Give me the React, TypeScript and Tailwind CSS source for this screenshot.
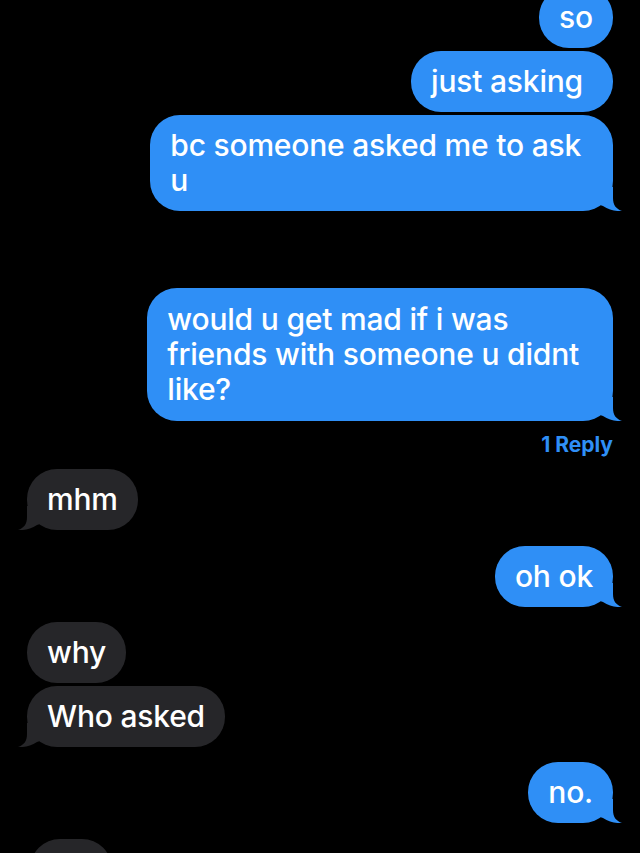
import React from 'react';

type Msg = { text: React.ReactNode; me: boolean; tail?: boolean; mt: string; pad?: string };

const messages: Msg[] = [
  { text: 'so', me: true, mt: '-mt-[13px]' },
  { text: 'just asking', me: true, mt: 'mt-[3px]', pad: 'pr-[30px]' },
  { text: <>bc someone asked me to ask<br />u</>, me: true, tail: true, mt: 'mt-[3px]', pad: 'pr-[32px]' },
  { text: <>would u get mad if i was<br />friends with someone u didnt<br />like?</>, me: true, tail: true, mt: 'mt-[77px]', pad: 'pr-[34px] py-[14px]' },
];

const rest: Msg[] = [
  { text: 'mhm', me: false, tail: true, mt: 'mt-[12px]' },
  { text: 'oh ok', me: true, tail: true, mt: 'mt-[16px]' },
  { text: 'why', me: false, mt: 'mt-[15px]' },
  { text: 'Who asked', me: false, tail: true, mt: 'mt-[3px]' },
  { text: 'no.', me: true, tail: true, mt: 'mt-[15px]' },
];

const Tail = ({ me }: { me: boolean }) => (
  <svg
    width="22"
    height="24"
    viewBox="0 0 22 24"
    className={`absolute bottom-0 ${me ? '-right-[9px]' : '-left-[9px] -scale-x-100'}`}
  >
    <path
      d="M13 0 L13 11 C13 18 16 22 22 24 C16 24.5 9 23 3 19 L0 18 L0 0 Z"
      fill={me ? '#2f8ff6' : '#262629'}
    />
  </svg>
);

const Bubble = ({ m }: { m: Msg }) => (
  <div className={`flex ${m.me ? 'justify-end' : 'justify-start'} ${m.mt}`}>
    <div
      className={`relative rounded-[30px] py-[13px] pl-5 text-[30px] font-medium leading-[35px] tracking-[-0.2px] text-white ${
        m.pad ?? 'pr-5'
      } ${m.me ? 'bg-[#2f8ff6]' : 'bg-[#262629]'}`}
    >
      <span className="relative z-10">{m.text}</span>
      {m.tail && <Tail me={m.me} />}
    </div>
  </div>
);

export default function App() {
  return (
    <div
      className="h-[853px] w-[640px] overflow-hidden bg-black px-[27px]"
      style={{ fontFamily: 'Inter, "Liberation Sans", sans-serif' }}
    >
      <div className="flex flex-col">
        {messages.map((m, i) => (
          <Bubble key={i} m={m} />
        ))}
        <div className="mt-[12px] flex justify-end text-[21px] font-bold leading-[24px] text-[#2f8ff6]">
          1 Reply
        </div>
        {rest.map((m, i) => (
          <Bubble key={i} m={m} />
        ))}
        <div className="mt-[16px] flex">
          <div className="ml-[3px] h-[61px] w-[82px] rounded-[30px] bg-[#262629]" />
        </div>
      </div>
    </div>
  );
}
